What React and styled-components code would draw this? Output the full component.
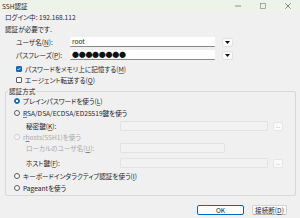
import React from "react";
import styled, { createGlobalStyle } from "styled-components";

const GlobalStyle = createGlobalStyle`
  html, body {
    margin: 0;
    padding: 0;
  }
  body {
    font-family: "Noto Sans CJK JP", "Noto Sans", sans-serif;
    font-size: 6.6px;
    font-feature-settings: "palt";
    color: #262626;
    background: #f0f0f0;
  }
`;

const Window = styled.div`
  width: 300px;
  height: 218px;
  background: #f0f0f0;
  display: flex;
  flex-direction: column;
  overflow: hidden;
`;

const TitleBar = styled.div`
  height: 12px;
  flex: none;
  display: flex;
  align-items: center;
  background: #eef3ea;
  padding-left: 2px;
  font-size: 6.5px;
  color: #222;
`;

const Controls = styled.div`
  margin-left: auto;
  display: flex;
  height: 12px;
`;

const ControlCell = styled.div`
  width: 25px;
  display: flex;
  align-items: center;
  justify-content: center;
`;

const Body = styled.div`
  display: flex;
  flex-direction: column;
  padding: 0 4px 0 5px;
`;

const Line = styled.div`
  height: 10px;
  line-height: 10px;
  margin-top: ${(p) => p.$mt || 0}px;
  white-space: nowrap;
`;

const FieldRow = styled.div`
  display: flex;
  align-items: center;
  height: 10px;
  padding-left: 11px;
  margin-top: ${(p) => p.$mt || 0}px;
`;

const FieldLabel = styled.span`
  width: ${(p) => p.$w}px;
  flex: none;
  white-space: nowrap;
`;

const TextBox = styled.div`
  box-sizing: border-box;
  width: 145px;
  height: 10px;
  background: #fff;
  border-bottom: 1px solid #8a8a8a;
  border-radius: 1px;
  padding-left: 2px;
  line-height: 9px;
  font-size: 6.6px;
  white-space: nowrap;
  overflow: hidden;
`;

const Dots = styled.span`
  font-size: 7px;
  letter-spacing: -0.3px;
  color: #111;
`;

const DropButton = styled.div`
  box-sizing: border-box;
  width: 11px;
  height: 9px;
  margin-left: 7px;
  background: #fbfbfb;
  border: 1px solid #e2e2e2;
  border-radius: 2px;
  display: flex;
  align-items: center;
  justify-content: center;
`;

const CheckRow = styled.div`
  display: flex;
  align-items: center;
  gap: 3px;
  height: 10px;
  padding-left: 11px;
  margin-top: ${(p) => p.$mt || 0}px;
  white-space: nowrap;
`;

const Box = styled.span`
  box-sizing: border-box;
  width: 6px;
  height: 6px;
  flex: none;
  border-radius: 1px;
  border: 1px solid ${(p) => (p.$checked ? "#0f6cbd" : "#5c5c5c")};
  background: ${(p) => (p.$checked ? "#0f6cbd" : "#fafafa")};
  display: flex;
  align-items: center;
  justify-content: center;
`;

const Group = styled.fieldset`
  margin: 1px 0 0 0;
  padding: 0 0 2px 0;
  border: 1px solid #d8d8d8;
  border-radius: 2px;
  min-width: 0;
`;

const Legend = styled.legend`
  padding: 0 1px;
  margin-left: 2px;
  height: 10px;
  line-height: 10px;
`;

const RadioRow = styled.div`
  display: flex;
  align-items: center;
  gap: 3px;
  height: 10px;
  padding-left: 8px;
  margin-top: ${(p) => p.$mt || 0}px;
  color: ${(p) => (p.$disabled ? "#a8a8a8" : "inherit")};
  white-space: nowrap;
`;

const Radio = styled.span`
  box-sizing: border-box;
  width: 6px;
  height: 6px;
  flex: none;
  border-radius: 50%;
  border: 1px solid
    ${(p) => (p.$checked ? "#0f6cbd" : p.$disabled ? "#cfcfcf" : "#5c5c5c")};
  background: ${(p) =>
    p.$checked
      ? "radial-gradient(circle, #fff 0 1px, #0f6cbd 1.4px)"
      : "#fafafa"};
`;

const SubRow = styled.div`
  display: flex;
  align-items: center;
  height: 10px;
  padding-left: 20px;
  margin-top: ${(p) => p.$mt || 0}px;
  color: ${(p) => (p.$disabled ? "#a8a8a8" : "inherit")};
`;

const SubBox = styled.div`
  box-sizing: border-box;
  width: ${(p) => p.$w}px;
  height: 10px;
  background: #f2f2f2;
  border: 1px solid #e3e3e3;
  border-radius: 1px;
`;

const EllipsisButton = styled.div`
  box-sizing: border-box;
  width: 10px;
  height: 9px;
  margin-left: 5px;
  background: #fafafa;
  border: 1px solid #e6e6e6;
  border-radius: 2px;
  color: #b0b0b0;
  font-size: 5px;
  line-height: 6px;
  text-align: center;
`;

const Footer = styled.div`
  display: flex;
  justify-content: flex-end;
  gap: 8px;
  margin-top: 9px;
  padding-right: 9px;
`;

const Button = styled.div`
  box-sizing: border-box;
  width: ${(p) => p.$w}px;
  height: 10px;
  line-height: 8px;
  text-align: center;
  background: #fdfdfd;
  border: 1px solid ${(p) => (p.$primary ? "#0067c0" : "#d3d3d3")};
  border-bottom-color: ${(p) => (p.$primary ? "#0067c0" : "#b8b8b8")};
  border-radius: 2px;
  font-size: 6.6px;
  white-space: nowrap;
`;

const U = styled.span`
  text-decoration: underline;
  text-decoration-color: rgba(0, 0, 0, 0.45);
`;

const Triangle = () => (
  <svg width="5" height="3" viewBox="0 0 5 3">
    <path d="M0 0h5L2.5 3z" fill="#111" />
  </svg>
);

const Tick = () => (
  <svg width="4" height="4" viewBox="0 0 4 4">
    <path d="M0.5 2l1 1 2-2.2" fill="none" stroke="#fff" strokeWidth="0.8" />
  </svg>
);

export default function App() {
  return (
    <Window>
      <GlobalStyle />
      <TitleBar>
        SSH認証
        <Controls>
          <ControlCell>
            <svg width="6" height="6" viewBox="0 0 6 6">
              <path d="M0 3h6" stroke="#666" strokeWidth="0.7" />
            </svg>
          </ControlCell>
          <ControlCell>
            <svg width="6" height="6" viewBox="0 0 6 6">
              <rect x="0.5" y="0.5" width="5" height="5" fill="none" stroke="#888" strokeWidth="0.7" />
            </svg>
          </ControlCell>
          <ControlCell>
            <svg width="6" height="6" viewBox="0 0 6 6">
              <path d="M0.3 0.3l5.4 5.4M5.7 0.3l-5.4 5.4" stroke="#555" strokeWidth="0.7" />
            </svg>
          </ControlCell>
        </Controls>
      </TitleBar>

      <Body>
        <Line>ログイン中: 192.168.112</Line>
        <Line $mt={2}>認証が必要です.</Line>

        <FieldRow $mt={3}>
          <FieldLabel $w={54}>
            ユーザ名(<U>N</U>):
          </FieldLabel>
          <TextBox>root</TextBox>
          <DropButton>
            <Triangle />
          </DropButton>
        </FieldRow>
        <FieldRow $mt={3}>
          <FieldLabel $w={54}>
            パスフレーズ(<U>P</U>):
          </FieldLabel>
          <TextBox>
            <Dots>●●●●●●●●</Dots>
          </TextBox>
          <DropButton>
            <Triangle />
          </DropButton>
        </FieldRow>

        <CheckRow $mt={4}>
          <Box $checked>
            <Tick />
          </Box>
          <span>
            パスワードをメモリ上に記憶する(<U>M</U>)
          </span>
        </CheckRow>
        <CheckRow $mt={1}>
          <Box />
          <span>
            エージェント転送する(<U>Q</U>)
          </span>
        </CheckRow>

        <Group>
          <Legend>認証方式</Legend>
          <RadioRow>
            <Radio $checked />
            <span>
              プレインパスワードを使う(<U>L</U>)
            </span>
          </RadioRow>
          <RadioRow $mt={2}>
            <Radio />
            <span>
              <U>R</U>SA/DSA/ECDSA/ED25519鍵を使う
            </span>
          </RadioRow>
          <SubRow $mt={3}>
            <FieldLabel $w={94}>
              秘密鍵(<U>K</U>):
            </FieldLabel>
            <SubBox $w={148} />
            <EllipsisButton>...</EllipsisButton>
          </SubRow>
          <RadioRow $mt={1} $disabled>
            <Radio $disabled />
            <span>
              r<U>h</U>osts(SSH1)を使う
            </span>
          </RadioRow>
          <SubRow $mt={1} $disabled>
            <FieldLabel $w={94}>
              ローカルのユーザ名(<U>U</U>):
            </FieldLabel>
            <SubBox $w={105} />
          </SubRow>
          <SubRow $mt={5}>
            <FieldLabel $w={94}>
              ホスト鍵(<U>F</U>):
            </FieldLabel>
            <SubBox $w={148} />
            <EllipsisButton>...</EllipsisButton>
          </SubRow>
          <RadioRow $mt={3}>
            <Radio />
            <span>
              キーボードインタラクティブ認証を使う(<U>I</U>)
            </span>
          </RadioRow>
          <RadioRow $mt={2}>
            <Radio />
            <span>
              Pageantを使う
            </span>
          </RadioRow>
        </Group>

        <Footer>
          <Button $w={47} $primary>
            OK
          </Button>
          <Button $w={35}>
            接続断(<U>D</U>)
          </Button>
        </Footer>
      </Body>
    </Window>
  );
}
